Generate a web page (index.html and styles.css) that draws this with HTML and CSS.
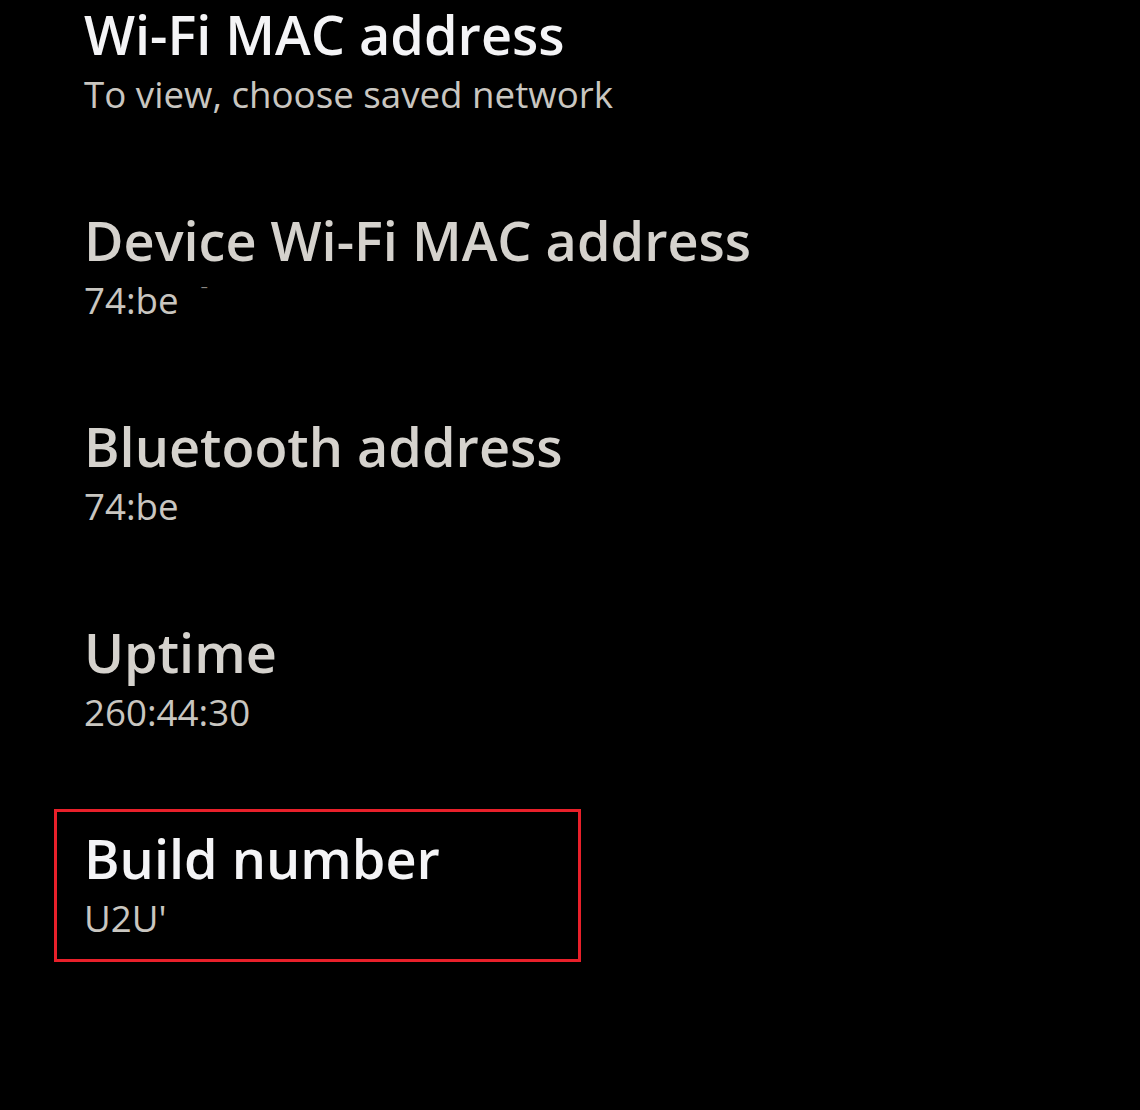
FILE: index.html
```html
<!DOCTYPE html>
<html lang="en">
<head>
  <meta charset="UTF-8" />
  <meta name="viewport" content="width=device-width, initial-scale=1.0"/>
  <title>About phone</title>
  <link rel="stylesheet" href="styles.css">
</head>
<body>
  <div class="list">
    <div class="entry first">
      <div class="title">Wi-Fi MAC address</div>
      <div class="value">To view, choose saved network</div>
    </div>
    <div class="entry">
      <div class="title">Device Wi-Fi MAC address</div>
      <div class="value">74:be<span class="blur">&#8211;</span></div>
    </div>
    <div class="entry">
      <div class="title">Bluetooth address</div>
      <div class="value">74:be</div>
    </div>
    <div class="entry">
      <div class="title">Uptime</div>
      <div class="value">260:44:30</div>
    </div>
    <div class="entry first highlight">
      <div class="title">Build number</div>
      <div class="value">U2U'</div>
    </div>
  </div>
</body>
</html>
```

FILE: styles.css
```css
html, body {
  margin: 0;
  padding: 0;
  background: #000;
  height: 100%;
  overflow: hidden;
  font-family: "Open Sans", "DejaVu Sans", sans-serif;
}
.list {
  display: flex;
  flex-direction: column;
  gap: 53px;
  margin-top: -15px;
  padding-left: 54px;
}
.entry {
  box-sizing: border-box;
  width: 527px;
  padding: 14px 27px 16px;
  border: 3px solid transparent;
  color: #d5d2cd;
}
.entry.first .title {
  color: #f4f4f6;
}
.highlight {
  border-color: #e8202a;
}
.title {
  font-size: 54px;
  font-weight: 600;
  line-height: 64px;
  white-space: nowrap;
}
.value {
  margin-top: 3px;
  font-size: 36.7px;
  line-height: 50px;
  color: #c9c6c0;
  white-space: nowrap;
}
.blur {
  font-size: 14px;
  line-height: 0;
  vertical-align: 22px;
  margin-left: 22px;
  color: #8a8884;
}
```
